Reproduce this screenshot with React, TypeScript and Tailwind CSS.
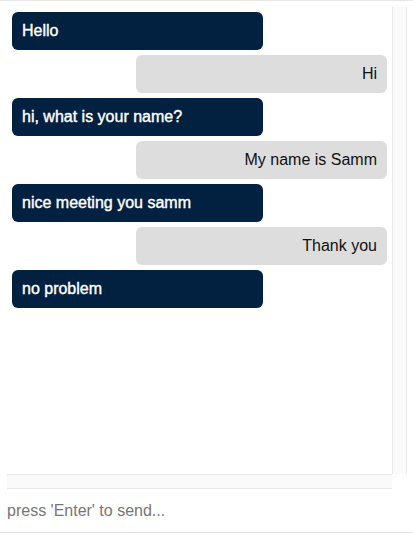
import React from 'react'

type Msg = { from: 'bot' | 'me'; text: string }

const messages: Msg[] = [
  { from: 'bot', text: 'Hello' },
  { from: 'me', text: 'Hi' },
  { from: 'bot', text: 'hi, what is your name?' },
  { from: 'me', text: 'My name is Samm' },
  { from: 'bot', text: 'nice meeting you samm' },
  { from: 'me', text: 'Thank you' },
  { from: 'bot', text: 'no problem' },
]

export default function App() {
  return (
    <div
      className="w-[413px] h-[533px] bg-white border-t border-[#e6e6e6] flex flex-col"
      style={{ fontFamily: '"Liberation Sans", Arial, sans-serif' }}
    >
      {/* Messages + vertical scrollbar track */}
      <div className="flex h-[473px]">
        <div className="w-[392px] pt-[11px] flex flex-col gap-[5px]">
          {messages.map((m, i) =>
            m.from === 'bot' ? (
              <div
                key={i}
                className="ml-[12px] w-[251px] h-[38px] rounded-[6px] bg-[#02203f] text-white text-[16px] [-webkit-text-stroke:0.4px_white] pl-[10px] flex items-center"
              >
                {m.text}
              </div>
            ) : (
              <div
                key={i}
                className="ml-[136px] w-[251px] h-[38px] rounded-[6px] bg-[#dddddd] text-[#111] text-[16px] pr-[10px] flex items-center justify-end"
              >
                {m.text}
              </div>
            )
          )}
        </div>
        <div className="mt-[6px] w-[15px] bg-[#fafafa] border-x border-[#e8e8e8]" />
      </div>

      {/* Horizontal scrollbar track */}
      <div className="ml-[7px] w-[385px] h-[15px] bg-[#fafafa] border-y border-[#e8e8e8]" />

      {/* Input */}
      <input
        className="h-[44px] px-[7px] text-[16px] text-[#333] placeholder:text-[#767676] border-b border-[#e6e6e6] outline-none"
        placeholder="press 'Enter' to send..."
      />
    </div>
  )
}
